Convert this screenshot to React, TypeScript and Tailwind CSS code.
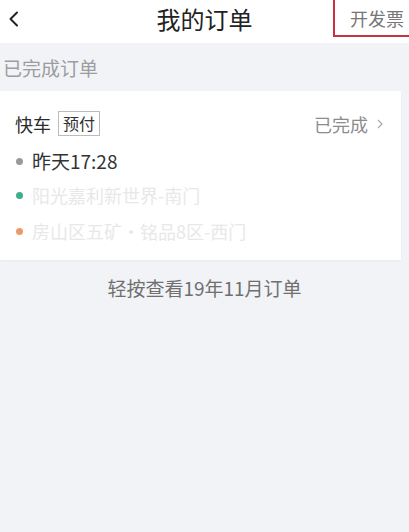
export default function App() {
  return (
    <div
      className="flex h-[532px] w-[409px] flex-col bg-[#f1f3f7]"
      style={{ fontFamily: '"Noto Sans CJK SC", "Noto Sans", sans-serif' }}
    >
      <header className="relative flex h-[43px] items-center bg-white">
        <svg className="absolute left-[8px] top-[11px] h-[16px] w-[12px]" viewBox="0 0 12 16" fill="none">
          <path d="M9 1.5 L2.5 8 L9 14.5" stroke="#222" strokeWidth="2" strokeLinecap="round" strokeLinejoin="round" />
        </svg>
        <h1 className="w-full pb-[5px] text-center text-[24px] leading-none text-[#222]">我的订单</h1>
        <div className="absolute right-[-2px] top-[-2px] flex h-[39px] w-[78px] items-center justify-center border-2 border-[#c8323c] pl-[10px]">
          <span className="text-[18px] leading-none text-[#777]">开发票</span>
        </div>
      </header>

      <p className="px-[3px] pt-[12px] pb-[10px] text-[19px] leading-[26px] text-[#9b9da1]">已完成订单</p>

      <div className="mr-[8px] bg-white pl-[15px] pr-[18px] pt-[20px] pb-[17px] shadow-[0_1px_2px_rgba(0,0,0,0.04)]">
        <div className="flex items-center justify-between">
          <div className="flex items-center">
            <span className="text-[18px] leading-[24px] text-[#2c2c2c]">快车</span>
            <span className="ml-[7px] border border-[#bbb] px-[4px] py-[1px] text-[16px] leading-[21px] text-[#333]">预付</span>
          </div>
          <div className="flex items-center text-[#8c8c8c]">
            <span className="text-[18px] leading-[24px]">已完成</span>
            <svg className="ml-[9px] h-[10px] w-[6px]" viewBox="0 0 6 10" fill="none">
              <path d="M1 1 L5 5 L1 9" stroke="#aaa" strokeWidth="1.2" />
            </svg>
          </div>
        </div>

        <div className="mt-[13px] flex items-center">
          <span className="ml-[1px] h-[7px] w-[7px] rounded-full bg-[#9a9a9a]" />
          <span className="ml-[9px] text-[19px] leading-[24px] text-[#333]">昨天17:28</span>
        </div>
        <div className="mt-[10px] flex items-center">
          <span className="ml-[1px] h-[7px] w-[7px] rounded-full bg-[#3fae8e]" />
          <span className="ml-[9px] text-[18px] leading-[24px] text-[#e8e8e8]">阳光嘉利新世界-南门</span>
        </div>
        <div className="mt-[12px] flex items-center">
          <span className="ml-[1px] h-[7px] w-[7px] rounded-full bg-[#ec9a6c]" />
          <span className="ml-[9px] text-[18px] leading-[24px] text-[#e8e8e8]">房山区五矿·铭品8区-西门</span>
        </div>
      </div>

      <p className="mt-[16px] text-center text-[19px] leading-[24px] text-[#6f6f6f]">轻按查看19年11月订单</p>
    </div>
  );
}
